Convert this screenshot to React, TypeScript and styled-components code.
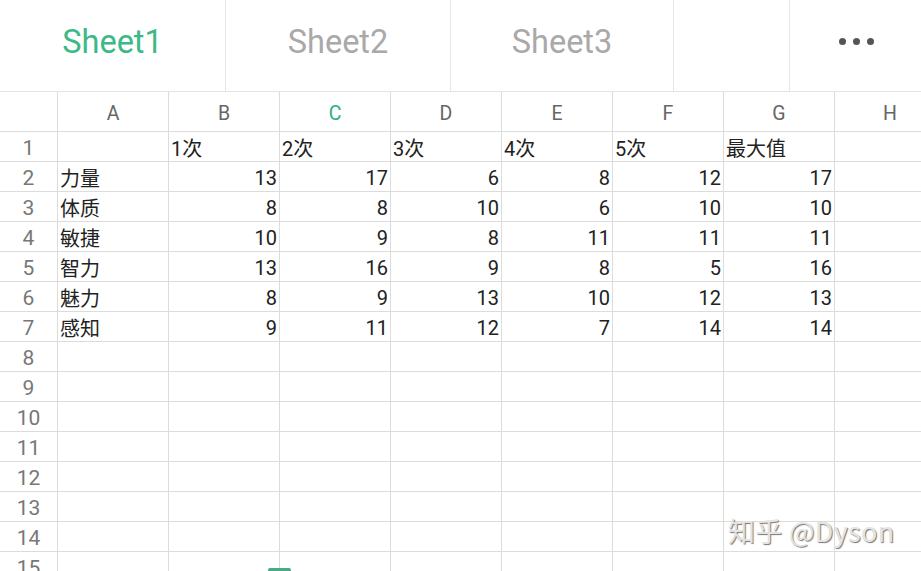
import React from 'react'
import styled, { createGlobalStyle } from 'styled-components'

const GlobalStyle = createGlobalStyle`
  html, body {
    margin: 0;
    padding: 0;
    background: #fff;
    font-family: Roboto, "Noto Sans CJK SC", sans-serif;
  }
`;

const Screen = styled.div`
  position: relative;
  width: 921px;
  height: 571px;
  overflow: hidden;
  background: #fff;
`;

const TabBar = styled.nav`
  display: flex;
  height: 92px;
  border-bottom: 1px solid #e4e4e4;
  box-sizing: border-box;
`;

const Tab = styled.div<{ $w: number; $active?: boolean }>`
  flex: 0 0 ${({ $w }) => $w}px;
  display: flex;
  align-items: center;
  justify-content: center;
  padding-bottom: 8px;
  box-sizing: border-box;
  border-right: 1px solid #e6e6e6;
  font-size: 32.5px;
  color: ${({ $active }) => ($active ? '#3cb987' : '#a9a9a9')};
  &:last-child {
    border-right: none;
    flex: 1;
  }
`;

const Dots = styled.div`
  display: flex;
  gap: 7px;
  margin-left: 2px;
`;

const Dot = styled.span`
  width: 7px;
  height: 7px;
  border-radius: 50%;
  background: #555;
`;

const Grid = styled.div`
  display: grid;
  grid-template-columns: 58px repeat(8, 111px);
  grid-auto-rows: 30px;
  grid-template-rows: 40px;
`;

const Cell = styled.div<{ $align?: 'left' | 'right' | 'center' }>`
  box-sizing: border-box;
  border-right: 1px solid #dcdcdc;
  border-bottom: 1px solid #dcdcdc;
  display: flex;
  align-items: center;
  justify-content: ${({ $align }) =>
    $align === 'right' ? 'flex-end' : $align === 'center' ? 'center' : 'flex-start'};
  padding: 2px 2px 0 2px;
  font-size: 20px;
  color: #222;
  white-space: nowrap;
  overflow: hidden;
`;

const ColHead = styled(Cell)<{ $selected?: boolean }>`
  color: ${({ $selected }) => ($selected ? '#2eae7c' : '#666')};
  font-size: 19.5px;
  padding-top: 4px;
`;

const RowHead = styled(Cell)`
  color: #777;
  font-size: 21px;
`;

const Watermark = styled.div`
  position: absolute;
  left: 728px;
  top: 511px;
  font-size: 27px;
  color: #e4e4e4;
  text-shadow: 1px 1px 1px #777;
  letter-spacing: 0.3px;
  font-family: "Noto Sans CJK SC", "Noto Sans", sans-serif;
`;

const Handle = styled.div`
  position: absolute;
  left: 268px;
  top: 568px;
  width: 23px;
  height: 4px;
  background: #4aaa86;
  border-radius: 2px 2px 0 0;
`;

const cols = ['A', 'B', 'C', 'D', 'E', 'F', 'G', 'H'];

const data: (string | number)[][] = [
  ['', '1次', '2次', '3次', '4次', '5次', '最大值'],
  ['力量', 13, 17, 6, 8, 12, 17],
  ['体质', 8, 8, 10, 6, 10, 10],
  ['敏捷', 10, 9, 8, 11, 11, 11],
  ['智力', 13, 16, 9, 8, 5, 16],
  ['魅力', 8, 9, 13, 10, 12, 13],
  ['感知', 9, 11, 12, 7, 14, 14],
];

const App = () => {
  const rows = Array.from({ length: 15 }, (_, i) => data[i] ?? []);
  return (
    <Screen>
      <GlobalStyle />
      <TabBar>
        <Tab $w={226} $active>Sheet1</Tab>
        <Tab $w={225}>Sheet2</Tab>
        <Tab $w={223}>Sheet3</Tab>
        <Tab $w={116} />
        <Tab $w={131}>
          <Dots><Dot /><Dot /><Dot /></Dots>
        </Tab>
      </TabBar>
      <Grid>
        <ColHead />
        {cols.map((c) => (
          <ColHead key={c} $align="center" $selected={c === 'C'}>{c}</ColHead>
        ))}
        {rows.map((row, r) => (
          <React.Fragment key={r}>
            <RowHead $align="center">{r + 1}</RowHead>
            {cols.map((c, ci) => {
              const v = row[ci];
              return (
                <Cell key={c} $align={typeof v === 'number' ? 'right' : 'left'}>
                  {v ?? ''}
                </Cell>
              );
            })}
          </React.Fragment>
        ))}
      </Grid>
      <Watermark>知乎 @Dyson</Watermark>
      <Handle />
    </Screen>
  )
}

export default App
